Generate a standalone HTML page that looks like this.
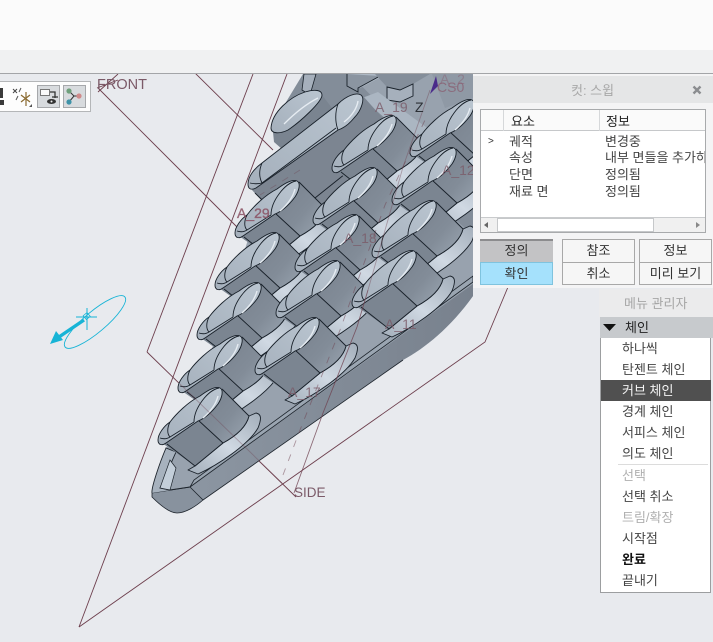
<!DOCTYPE html>
<html lang="ko"><head><meta charset="utf-8"><title>컷: 스윕</title>
<style>
html,body{margin:0;padding:0;background:#e8eaee}
body{width:713px;height:642px;position:relative;overflow:hidden;font-family:"Liberation Sans","Noto Sans CJK KR",sans-serif;font-size:13px;color:#333}
.a{position:absolute;box-sizing:border-box}
.t{position:absolute;white-space:nowrap;line-height:16px}
.btn{position:absolute;box-sizing:border-box;width:73px;height:24px;background:#f6f6f6;border:1px solid #a8a8a8;text-align:center;line-height:21px}
.m{position:absolute;left:622px;white-space:nowrap;line-height:16px;color:#444}
</style></head><body>
<div class="a" style="left:0;top:0;width:713px;height:50px;background:#fbfbfb"></div>
<div class="a" style="left:0;top:50px;width:713px;height:23px;background:#f0f1f2"></div>
<div class="a" style="left:0;top:73px;width:713px;height:1px;background:#a3a5a8"></div>
<svg class="a" style="left:0;top:74px" width="713" height="568" viewBox="0 74 713 568">
<defs>
<linearGradient id="g1" x1="0" y1="0" x2="1" y2="0.9"><stop offset="0" stop-color="#78818d"/><stop offset=".6" stop-color="#828c98"/><stop offset="1" stop-color="#98a3af"/></linearGradient>
<linearGradient id="g2" x1="0" y1="1" x2="1" y2="0"><stop offset="0" stop-color="#a5b0bc"/><stop offset="1" stop-color="#bac5d0"/></linearGradient>
<linearGradient id="g3" x1="0" y1="0" x2="1" y2="0"><stop offset="0" stop-color="#8c96a2"/><stop offset="1" stop-color="#78818d"/></linearGradient>
<linearGradient id="g4" x1="0" y1="1" x2="1" y2="0"><stop offset="0" stop-color="#a3aeba"/><stop offset=".5" stop-color="#d0d9e3"/><stop offset="1" stop-color="#a3aeba"/></linearGradient>
<g id="key" stroke="#182029" stroke-width=".9" stroke-linejoin="round">
<path d="M30,30 L40,34 C60,25 90,5 100,-12 C104,-22 103,-26 98,-27 L91,-24 C88,-12 76,-3 65,3 L37,26Z" fill="url(#g4)"/>
<path d="M4,3 L37,26 L65,3 L40,-20Z" fill="#7b8591" stroke="none"/>
<path d="M40,-20 L65,3 C76,-3 88,-12 91,-24 L64,-51 L45,-30Z" fill="url(#g1)" stroke="none"/>
<path d="M65,3 C76,-3 88,-12 91,-24 M64,-51 L91,-24 M9,4 L37,26 L65,3 L40,-20" fill="none"/>
<path d="M0,0 C0,-6 6,-14 12,-18 C18,-26 30,-38 42,-44 C50,-50 58,-54 62,-52 C66,-50 64,-42 60,-36 C54,-28 48,-22 40,-19 L8,3 C4,6 0,5 0,0Z" fill="url(#g2)"/>
<path d="M36,-18 C36,-32 50,-50 61,-52 M12,-18 C9,-12 9,-6 12,-3 M2,-2 C5,-1 9,-1 12,-3 L36,-18" fill="none"/>
<path d="M45,-22 C52,-28 58,-36 60,-44" fill="none" stroke="#e6ecf2" stroke-width="1.4"/>
</g>
</defs>
<!-- datum lines under model -->
<g fill="none" stroke="#6d3f4d" stroke-width=".9">
<path d="M79,627 L287,74"/>
<path d="M79,627 L485,342 L508,287"/>
<path d="M147,352 L253,74"/>
<path d="M147,352 L296,497"/>
<path d="M98,88 L190,180 L250,240"/>
<path d="M98,92 L118,74 M97,88 L118,80"/>
<path d="M195,73 L273,150"/>
</g>
<!-- floor and side wall -->
<path d="M152,493 C152,484 160,465 166,448 L190,410 L215,340 L240,265 L262,195 L298,130 L306,74 L473,74 L473,296 C450,328 425,348 403,360 L203,500 C195,507 185,513 177,513 C170,513 160,505 152,497Z" fill="#98a2ae"/>
<path d="M190,487 L473,284 L473,296 C450,328 425,348 403,360 L203,500Z" fill="url(#g3)"/>
<path d="M152,493 L190,487 L203,500 C195,507 185,513 177,513 C170,513 160,505 152,497Z" fill="#88929e" stroke="#1d242c" stroke-width=".8"/>
<path d="M152,493 C151,488 160,462 166,448 L176,452 L160,488 L170,490 L190,487" fill="#a7b2be" stroke="#1d242c" stroke-width=".9"/>
<path d="M160,488 L170,460 L176,468 L170,490Z" fill="#c3ced9" stroke="#1d242c" stroke-width=".7"/>
<path d="M190,487 L473,282 L473,276 L194,480Z" fill="#9aa5b1" stroke="#1d242c" stroke-width=".8"/>
<path d="M203,500 L403,360" fill="none" stroke="#1d242c" stroke-width=".8"/>
<!-- top structures -->
<path d="M280,112 L303,74 L350,74 L473,200 L473,235 L340,120Z" fill="#838d99"/>
<path d="M304,74 L316,74 L310,95 L302,90Z" fill="#a6b0bc" stroke="#182029" stroke-width=".8"/>
<path d="M347,74 L360,88 L385,75 L372,74Z" fill="#adb8c4"/>
<path d="M347,74 L347,86 L358,92 L358,88 L380,76" fill="#8b95a1" stroke="#182029" stroke-width=".9"/>
<path d="M375,74 L430,74 L413,84 L400,90 L387,87Z" fill="#848e9a"/>
<path d="M387,87 L387,100 L400,102 L413,96 L413,84 L400,90Z" fill="#a6b0bc" stroke="#182029" stroke-width=".9"/>
<path d="M362,98 L378,92 L430,130 L473,165 L473,196Z" fill="#abb6c2"/>
<path d="M432,74 L473,74 L473,98 L445,108Z" fill="#8f99a5"/>
<!-- round back key -->
<g stroke="#182029" stroke-width=".9">
<path d="M273,132 L274,142 L300,165 L345,125 L322,95Z" fill="#7a8490" stroke="none"/>
<path d="M271,128 C272,112 290,97 305,92 C315,89 322,90 322,95 C322,102 300,122 288,130 C280,134 271,134 271,128Z" fill="url(#g2)"/>
<path d="M284,124 C294,114 306,104 318,98" fill="none" stroke="#e6ecf2" stroke-width="1.3"/>
</g>
<!-- long key -->
<g stroke="#182029" stroke-width=".9" stroke-linejoin="round">
<path d="M252,190 L290,232 L402,140 L363,96Z" fill="#7c8591" stroke="none"/>
<path d="M255,193 L285,222 L375,150" fill="none"/>
<path d="M248,184 C248,176 255,168 262,163 L338,104 C346,96 356,92 361,95 C365,98 362,110 354,118 C350,123 344,128 338,130 L256,188 C252,190 248,190 248,184Z" fill="url(#g2)"/>
<path d="M262,163 C259,170 259,177 262,183 L336,128 M338,104 C335,112 335,122 338,130 M250,183 C254,184 258,184 262,183" fill="none"/>
<path d="M344,122 C352,116 357,108 358,101" fill="none" stroke="#e6ecf2" stroke-width="1.4"/>
</g>
<use href="#key" x="235" y="233"/>
<use href="#key" x="215" y="285"/>
<use href="#key" x="332" y="168"/>
<use href="#key" x="197" y="335"/>
<use href="#key" x="313" y="220"/>
<use href="#key" x="410" y="152"/>
<use href="#key" x="295" y="267"/>
<use href="#key" x="178" y="388"/>
<use href="#key" x="392" y="200"/>
<use href="#key" x="276" y="313"/>
<use href="#key" x="158" y="440"/>
<use href="#key" x="372" y="253"/>
<use href="#key" x="255" y="370"/>
<use href="#key" x="352" y="303"/>
<!-- datum lines over model (faint) -->
<g fill="none" stroke="#6d3f4d" stroke-width=".9">
<path d="M180,384 L282,483" stroke-opacity=".35"/>
<path d="M294,493 L323,413 L357,327 L368,290" stroke-opacity=".75"/>
<path d="M368,290 L403,167 L430,90" stroke-opacity=".4"/>
<path d="M283,475 L300,430 L340,330 L385,205 L425,120" stroke-dasharray="7 8" stroke-opacity=".5"/>
<path d="M300,170 L260,195" stroke-dasharray="7 7" stroke-opacity=".35"/>
</g>
<path d="M430,94 L436,76 L438,86Z" fill="#4a2a8a"/>
<g font-family="Liberation Sans, sans-serif" font-size="14" fill="#7b5a68">
<text x="97" y="89" font-size="14.500">FRONT</text>
<text x="294" y="497" font-size="13.500">SIDE</text>
<text x="375" y="112" fill-opacity=".8">A_19</text>
<text x="415" y="112" fill="#2c3036">Z</text>
<text x="442" y="175" fill-opacity=".8">A_12</text>
<text x="237" y="218" fill="#8a5062" stroke="#8a5062" stroke-width=".3" fill-opacity=".8">A_29</text>
<text x="344" y="243" fill-opacity=".8">A_18</text>
<text x="288" y="397" fill-opacity=".8">A_17</text>
<text x="385" y="329" fill-opacity=".8">A_11</text>
<text x="437" y="92" fill="#8a6274" fill-opacity=".8">CS0</text>
<text x="440" y="84" fill="#8a6274" fill-opacity=".5">A_2</text>
</g>
<!-- cyan csys -->
<g fill="none" stroke="#17b4d6">
<ellipse cx="95" cy="322" rx="39" ry="10.500" transform="rotate(-40 95 322)" stroke-width=".9"/>
<path d="M87,308 V330 M76,317 H97" stroke-width="1"/>
<rect x="84" y="314" width="5" height="5" transform="rotate(-40 86 316)" stroke-width=".8"/>
<path d="M84,320 L56,339" stroke-width="3.400"/>
</g>
<path d="M50,344 L56,331 L63,340Z" fill="#17b4d6"/>
</svg>
<!-- toolbar -->
<div class="a" style="left:-3px;top:81px;width:94px;height:31px;background:#fdfdfd;border:1px solid #b4b6b8"></div>
<svg class="a" style="left:0;top:81px" width="91" height="31" viewBox="0 81 91 31">
<path d="M0,88 H3 V98 H0Z M0,100 H4 V105 H0Z" fill="#3a3a3a"/>
<g fill="none" stroke-width="1">
<path d="M13,89 L17,93 M17,89 L13,93" stroke="#444"/>
<path d="M21,88 L19,92 M18,96 L16,100" stroke="#555"/>
<path d="M26,92 V106 M21,95 L30,102 M30,95 L21,102" stroke="#8a6a30" stroke-width="1.200"/>
</g>
<path d="M32,104 V107 H29Z" fill="#555"/>
<rect x="37.500" y="85.500" width="22" height="22" fill="#d8dbde" stroke="#a6a8ab"/>
<rect x="40.500" y="89.500" width="9" height="6" fill="#fafafa" stroke="#777"/>
<path d="M50,92 H55 V98 M52,97 H58" fill="none" stroke="#333" stroke-width="1.300"/>
<ellipse cx="51.500" cy="101.500" rx="4.500" ry="2.500" fill="#333"/><circle cx="51.500" cy="101.500" r="1" fill="#eee"/>
<rect x="63.500" y="85.500" width="22" height="22" fill="#d8dbde" stroke="#a6a8ab"/>
<path d="M69,91 L74,96 L69,102 M74,96 H79" fill="none" stroke="#333"/>
<circle cx="69" cy="91" r="2.600" fill="#6fa07c"/><circle cx="79" cy="96" r="2.600" fill="#d08a8a"/><circle cx="69" cy="102" r="2.600" fill="#3f93a8"/>
</svg>
<!-- dialog -->
<div class="a" style="left:473px;top:74px;width:240px;height:214px;background:#f4f4f5"></div>
<div class="a" style="left:473px;top:76px;width:240px;height:27px;background:#e5e6e7"></div>
<div class="t" style="left:571px;top:83px;color:#a8a8a8">컷: 스윕</div>
<svg class="a" style="left:692px;top:85px" width="10" height="10"><path d="M1.500,1.500 L8.500,8.500 M8.500,1.500 L1.500,8.500" stroke="#8b8d90" stroke-width="2.400"/></svg>
<div class="a" style="left:480px;top:109px;width:226px;height:124px;background:#fff;border:1px solid #a8aaac"></div>
<div class="a" style="left:481px;top:110px;width:224px;height:21px;background:#fafafa;border-bottom:1px solid #c6c8ca"></div>
<div class="a" style="left:503px;top:110px;width:1px;height:21px;background:#d6d8da"></div>
<div class="a" style="left:599px;top:110px;width:1px;height:21px;background:#d6d8da"></div>
<div class="t" style="left:511px;top:114px;color:#222">요소</div>
<div class="t" style="left:606px;top:114px;color:#222">정보</div>
<div class="t" style="left:488px;top:134px;font-size:10px">&gt;</div>
<div class="t" style="left:509px;top:134px;color:#444">궤적</div>
<div class="t" style="left:509px;top:150px;color:#444">속성</div>
<div class="t" style="left:509px;top:167px;color:#444">단면</div>
<div class="t" style="left:509px;top:184px;color:#444">재료 면</div>
<div class="t" style="left:605px;top:134px;color:#444">변경중</div>
<div class="t" style="left:605px;top:150px;color:#444;width:100px;overflow:hidden">내부 면들을 추가하</div>
<div class="t" style="left:605px;top:167px;color:#444">정의됨</div>
<div class="t" style="left:605px;top:184px;color:#444">정의됨</div>
<div class="a" style="left:481px;top:217px;width:224px;height:15px;background:#f0f0f0;border-top:1px solid #c9cbcd"></div>
<div class="a" style="left:497px;top:218px;width:157px;height:14px;background:#fff;border:1px solid #c6c8ca"></div>
<svg class="a" style="left:481px;top:218px" width="224" height="14"><path d="M7,4 L3,7 L7,10Z" fill="#666"/><path d="M215,4 L219,7 L215,10Z" fill="#888"/></svg>
<div class="btn" style="left:480px;top:239px;background:#c3c3c5;border:0;border-top:2px solid #8c8c8e;line-height:20px">정의</div>
<div class="btn" style="left:480px;top:262px;height:23px;background:#a5e1fc;border:1px solid #7fc3de;line-height:21px">확인</div>
<div class="btn" style="left:562px;top:239px">참조</div>
<div class="btn" style="left:562px;top:262px;height:23px">취소</div>
<div class="btn" style="left:639px;top:239px">정보</div>
<div class="btn" style="left:639px;top:262px;height:23px">미리 보기</div>
<!-- menu manager -->
<div class="a" style="left:599px;top:289px;width:114px;height:28px;background:#ebebec"></div>
<div class="t" style="left:624px;top:296px;color:#a6a6a6">메뉴 관리자</div>
<div class="a" style="left:600px;top:317px;width:113px;height:21px;background:#c7cacd"></div>
<svg class="a" style="left:603px;top:324px" width="14" height="8"><path d="M0,0 H13 L6.500,7Z" fill="#111"/></svg>
<div class="t" style="left:625px;top:320px;color:#222">체인</div>
<div class="a" style="left:600px;top:338px;width:111px;height:255px;background:#fff;border:1px solid #9c9ea0;border-top:0"></div>
<div class="m" style="top:341px">하나씩</div>
<div class="m" style="top:362px">탄젠트 체인</div>
<div class="a" style="left:601px;top:380px;width:110px;height:21px;background:#505050"></div>
<div class="m" style="top:383px;color:#f4f4f4">커브 체인</div>
<div class="m" style="top:404px">경계 체인</div>
<div class="m" style="top:425px">서피스 체인</div>
<div class="m" style="top:446px">의도 체인</div>
<div class="a" style="left:618px;top:464px;width:90px;height:1px;background:#dcdcdc"></div>
<div class="m" style="top:468px;color:#b0b0b0">선택</div>
<div class="m" style="top:489px">선택 취소</div>
<div class="m" style="top:510px;color:#b0b0b0">트림/확장</div>
<div class="m" style="top:531px">시작점</div>
<div class="m" style="top:552px;color:#111;font-weight:bold">완료</div>
<div class="m" style="top:573px">끝내기</div>
</body></html>
